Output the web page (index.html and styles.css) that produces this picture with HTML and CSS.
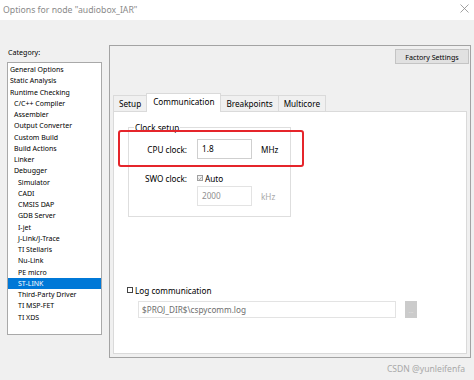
FILE: index.html
```html
<!DOCTYPE html>
<html lang="en">
<head>
    <meta charset="UTF-8">
    <title>Options for node "audiobox_IAR"</title>
    <link rel="stylesheet" href="styles.css">
</head>
<body>
    <div class="titlebar">
        <span class="title">Options for node "audiobox_IAR"</span>
        <svg class="close" width="9" height="9" viewBox="0 0 9 9">
            <path d="M0.5 0.5 L8.5 8.5 M8.5 0.5 L0.5 8.5" stroke="#8a8a8a" stroke-width="0.8" fill="none"/>
        </svg>
    </div>

    <div class="main">
        <!-- Category list -->
        <div class="category">
            <div class="category-label">Category:</div>
            <ul class="category-list">
                <li class="lvl0">General Options</li>
                <li class="lvl0">Static Analysis</li>
                <li class="lvl0">Runtime Checking</li>
                <li class="lvl1">C/C++ Compiler</li>
                <li class="lvl1">Assembler</li>
                <li class="lvl1">Output Converter</li>
                <li class="lvl1">Custom Build</li>
                <li class="lvl1">Build Actions</li>
                <li class="lvl1">Linker</li>
                <li class="lvl1">Debugger</li>
                <li class="lvl2">Simulator</li>
                <li class="lvl2">CADI</li>
                <li class="lvl2">CMSIS DAP</li>
                <li class="lvl2">GDB Server</li>
                <li class="lvl2">I-jet</li>
                <li class="lvl2">J-Link/J-Trace</li>
                <li class="lvl2">TI Stellaris</li>
                <li class="lvl2">Nu-Link</li>
                <li class="lvl2">PE micro</li>
                <li class="lvl2 selected">ST-LINK</li>
                <li class="lvl2">Third-Party Driver</li>
                <li class="lvl2">TI MSP-FET</li>
                <li class="lvl2">TI XDS</li>
            </ul>
        </div>

        <!-- Options frame -->
        <div class="options">
            <div class="options-top">
                <button class="btn-factory">Factory Settings</button>
            </div>
            <div class="tabs">
                <div class="tab">Setup</div>
                <div class="tab active">Communication</div>
                <div class="tab">Breakpoints</div>
                <div class="tab">Multicore</div>
            </div>
            <div class="pane">
                <fieldset class="group">
                    <legend>Clock setup</legend>
                    <div class="clock-row">
                        <span class="row-label">CPU clock:</span>
                        <div class="input">1.8</div>
                        <span class="unit">MHz</span>
                    </div>
                    <div class="clock-row check-row">
                        <span class="row-label">SWO clock:</span>
                        <span class="check checked"><svg width="5" height="5" viewBox="0 0 5 5"><path d="M0.6 2.6 L2 4 L4.4 1" stroke="#8a8a8a" stroke-width="0.9" fill="none"/></svg></span>
                        <span class="check-text">Auto</span>
                    </div>
                    <div class="clock-row input-row">
                        <div class="input disabled">2000</div>
                        <span class="unit disabled">kHz</span>
                    </div>
                </fieldset>

                <div class="log-row">
                    <span class="check"></span>
                    <span class="check-text">Log communication</span>
                </div>
                <div class="log-file">
                    <div class="input file">$PROJ_DIR$\cspycomm.log</div>
                    <button class="btn-browse">...</button>
                </div>

                <div class="highlight"></div>
            </div>
        </div>
    </div>

    <div class="watermark">CSDN @yunleifenfa</div>
</body>
</html>
```

FILE: styles.css
```css
* {
    margin: 0;
    padding: 0;
    box-sizing: border-box;
}
body {
    width: 474px;
    height: 380px;
    overflow: hidden;
    background: #f0f0f0;
    color: #000;
    font-family: 'Noto Sans', 'Open Sans', sans-serif;
}
.titlebar {
    height: 20px;
    background: #fff;
    display: flex;
    align-items: center;
    justify-content: space-between;
    padding: 0 5px 1px 3px;
}
.title {
    font-size: 8.7px;
    color: #8a8a8a;
}
.close {
    margin-bottom: 2px;
}
.main {
    display: flex;
    gap: 7px;
    padding: 25px 0 0 7px;
}
.category {
    width: 95px;
}
.category-label {
    font-size: 7.1px;
    line-height: 12px;
    padding: 1px 0 0 1px;
    margin-bottom: 4px;
}
.category-list {
    list-style: none;
    height: 273px;
    background: #fff;
    border: 1px solid #a9a9a9;
    padding-top: 1px;
    font-size: 7px;
}
.category-list li {
    height: 11.25px;
    line-height: 11.25px;
    white-space: nowrap;
}
.category-list .lvl0 {
    padding-left: 2px;
}
.category-list .lvl1 {
    padding-left: 6px;
}
.category-list .lvl2 {
    padding-left: 10px;
}
.category-list .selected {
    background: #0078d7;
    color: #fff;
}
.options {
    width: 362px;
    height: 313px;
    border: 1px solid #a3a3a3;
    padding: 3px 1px 3px 3px;
    display: flex;
    flex-direction: column;
}
.options-top {
    display: flex;
    justify-content: flex-end;
    height: 44px;
}
.btn-factory {
    width: 74px;
    height: 15px;
    background: #e1e1e1;
    border: 1px solid #c4c4c4;
    font-family: inherit;
    font-size: 7.1px;
    color: #000;
}
.tabs {
    display: flex;
    align-items: flex-end;
    height: 18px;
}
.tab {
    position: relative;
    height: 16px;
    line-height: 15px;
    padding: 0 5px;
    font-size: 8.2px;
    background: #f0f0f0;
    border: 1px solid #dadada;
    border-bottom: none;
    margin-right: -1px;
}
.tab.active {
    height: 19px;
    line-height: 16px;
    background: #fff;
    margin-bottom: -1px;
    z-index: 1;
    padding: 0 6px;
}
.pane {
    position: relative;
    flex: 1;
    margin-right: 2px;
    background: #fff;
    border: 1px solid #dadada;
    padding-top: 10px;
    font-size: 8.2px;
}
.group {
    width: 163px;
    margin-left: 14px;
    border: 1px solid #dedede;
    padding: 6px 0 10px 5px;
    min-width: 0;
}
.group legend {
    padding: 0 1px;
    line-height: 11px;
}
.clock-row {
    display: flex;
    align-items: center;
}
.row-label {
    width: 53px;
    text-align: right;
    margin-right: 10px;
}
.input {
    width: 55px;
    height: 20px;
    line-height: 18px;
    border: 1px solid #cfcfcf;
    padding-left: 4px;
    background: #fff;
}
.input.disabled {
    border-color: #e3e3e3;
    color: #8f8f8f;
}
.unit {
    margin-left: 9px;
}
.unit.disabled {
    color: #a8a8a8;
}
.check-row {
    height: 12px;
    margin-top: 13px;
}
.input-row {
    margin-top: 2px;
    padding-left: 63px;
}
.check {
    width: 6px;
    height: 6px;
    border: 1px solid #444;
    display: flex;
    align-items: center;
    justify-content: center;
    margin-right: 2px;
}
.check.checked {
    border-color: #a0a0a0;
    background: #f2f2f2;
}
.log-row {
    display: flex;
    align-items: center;
    height: 12px;
    margin: 67px 0 0 13px;
}
.log-file {
    display: flex;
    margin: 5px 0 0 24px;
}
.input.file {
    width: 258px;
    height: 17px;
    line-height: 15px;
    border-color: #e3e3e3;
    color: #6e6e6e;
    padding-left: 3px;
}
.btn-browse {
    width: 12px;
    height: 17px;
    margin-left: 9px;
    background: #cbcbcb;
    border: none;
    color: #e8e8e8;
    font-family: inherit;
    font-size: 6px;
    line-height: 20px;
}
/* red annotation box drawn over the clock setup */
.highlight {
    position: absolute;
    left: 4px;
    top: 18px;
    width: 186px;
    height: 37px;
    border: 2px solid #e5252b;
    border-radius: 3px;
}
.watermark {
    margin-top: 5px;
    padding-right: 9px;
    text-align: right;
    font-size: 8.6px;
    line-height: 12px;
    color: #a8a8a8;
}
```
